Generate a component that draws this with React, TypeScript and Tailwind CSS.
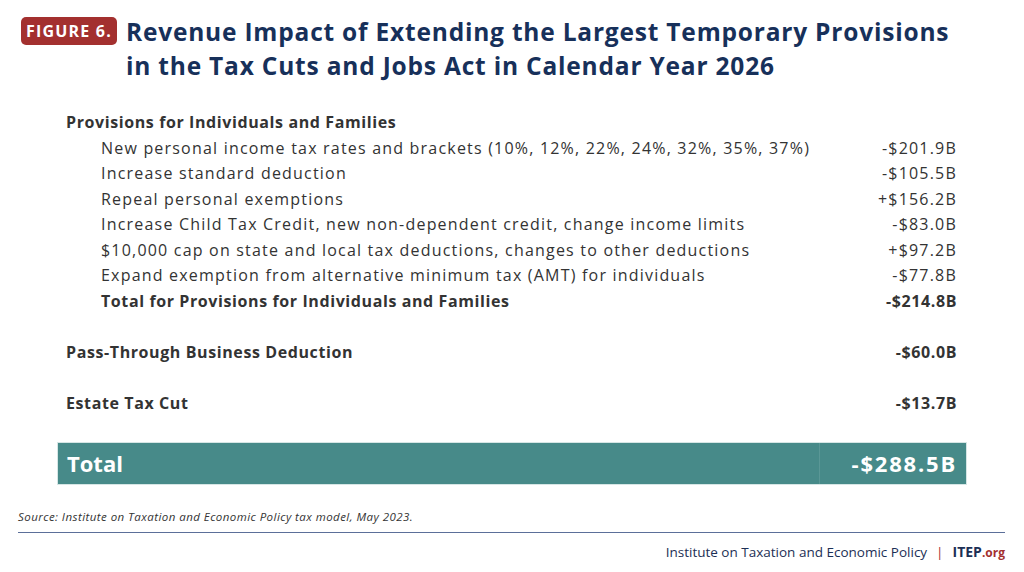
import React from "react";

const rows: { label: string; value: string; bold?: boolean }[] = [
  { label: "New personal income tax rates and brackets (10%, 12%, 22%, 24%, 32%, 35%, 37%)", value: "-$201.9B" },
  { label: "Increase standard deduction", value: "-$105.5B" },
  { label: "Repeal personal exemptions", value: "+$156.2B" },
  { label: "Increase Child Tax Credit, new non-dependent credit, change income limits", value: "-$83.0B" },
  { label: "$10,000 cap on state and local tax deductions, changes to other deductions", value: "+$97.2B" },
  { label: "Expand exemption from alternative minimum tax (AMT) for individuals", value: "-$77.8B" },
  { label: "Total for Provisions for Individuals and Families", value: "-$214.8B", bold: true },
];

export default function App() {
  return (
    <div
      className="w-[1024px] h-[572px] bg-white relative overflow-hidden text-[#333333]"
      style={{ fontFamily: '"Open Sans", "Liberation Sans", sans-serif' }}
    >
      {/* Header */}
      <div className="flex items-start pt-[15px] pl-[21px]">
        <div className="mt-[2px] h-[28px] px-[5px] rounded-[5px] bg-[#a3302f] text-white font-bold text-[16px] leading-[28px] tracking-[1.2px]">
          FIGURE 6.
        </div>
        <div className="ml-[9px] text-[#17305a] font-bold text-[24.5px] leading-[34px] tracking-[0.8px]">
          <div>Revenue Impact of Extending the Largest Temporary Provisions</div>
          <div>in the Tax Cuts and Jobs Act in Calendar Year 2026</div>
        </div>
      </div>

      {/* Table */}
      <div className="mt-[27px] ml-[57px] w-[910px]">
        <div className="pl-[9px] h-[25.5px] leading-[25.5px] font-bold text-[16px] tracking-[0.6px]">
          Provisions for Individuals and Families
        </div>
        {rows.map((r) => (
          <div
            key={r.label}
            className={
              r.bold
                ? "flex justify-between h-[25.5px] leading-[25.5px] text-[16px] pl-[44px] pr-[10px] font-bold tracking-[0.6px]"
                : "flex justify-between h-[25.5px] leading-[25.5px] text-[16px] pl-[44px] pr-[10px] tracking-[1.2px]"
            }
          >
            <span>{r.label}</span>
            <span>{r.value}</span>
          </div>
        ))}
        <div className="mt-[25.5px] flex justify-between h-[25.5px] leading-[25.5px] text-[16px] font-bold tracking-[0.6px] pl-[9px] pr-[10px]">
          <span>Pass-Through Business Deduction</span>
          <span>-$60.0B</span>
        </div>
        <div className="mt-[25.5px] flex justify-between h-[25.5px] leading-[25.5px] text-[16px] font-bold tracking-[0.6px] pl-[9px] pr-[10px]">
          <span>Estate Tax Cut</span>
          <span>-$13.7B</span>
        </div>
        <div className="mt-[26px] flex h-[43px] bg-[#478a89] border border-[#d6e6e5] text-white font-bold">
          <div className="flex-1 pl-[9px] text-[22px] leading-[41px]">Total</div>
          <div className="w-[147px] border-l border-[#5a9796] pr-[9px] text-right text-[22px] leading-[41px] tracking-[1.8px]">
            -$288.5B
          </div>
        </div>
      </div>

      {/* Source */}
      <div className="mt-[24px] ml-[18px] italic text-[11.5px] leading-[16px] tracking-[0.45px] text-[#333333]">
        Source: Institute on Taxation and Economic Policy tax model, May 2023.
      </div>
      <div className="mt-[7px] ml-[18px] w-[987px] h-[1px] bg-[#5b6f99]" />
      <div className="mt-[8px] w-[1005px] flex justify-end items-baseline text-[13.5px] text-[#1c2f55]">
        <span>Institute on Taxation and Economic Policy</span>
        <span className="mx-[9px] text-[#a3302f]">|</span>
        <span className="font-bold text-[14px]">ITEP</span>
        <span className="font-bold text-[#a3302f] text-[12px]">.org</span>
      </div>
    </div>
  );
}
